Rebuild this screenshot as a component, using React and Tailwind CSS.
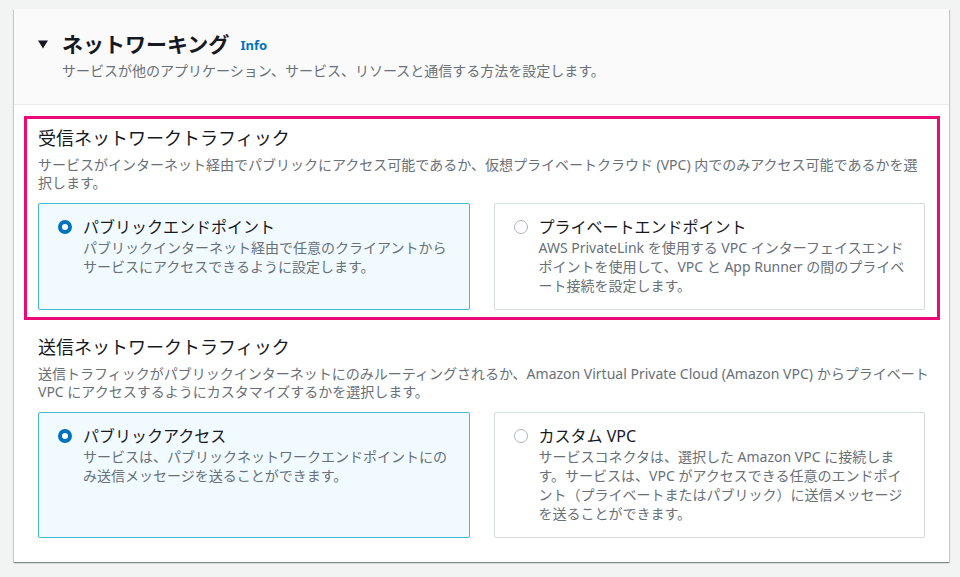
import React, { useState } from 'react'

const FONT = '"Noto Sans", "Noto Sans CJK JP", sans-serif'

const inbound = [
  {
    id: 'public',
    label: 'パブリックエンドポイント',
    lines: ['パブリックインターネット経由で任意のクライアントから', 'サービスにアクセスできるように設定します。'],
  },
  {
    id: 'private',
    label: 'プライベートエンドポイント',
    lines: [
      'AWS PrivateLink を使用する VPC インターフェイスエンド',
      'ポイントを使用して、VPC と App Runner の間のプライベ',
      'ート接続を設定します。',
    ],
  },
]

const outbound = [
  {
    id: 'public',
    label: 'パブリックアクセス',
    lines: ['サービスは、パブリックネットワークエンドポイントにの', 'み送信メッセージを送ることができます。'],
  },
  {
    id: 'vpc',
    label: 'カスタム VPC',
    lines: [
      'サービスコネクタは、選択した Amazon VPC に接続しま',
      'す。サービスは、VPC がアクセスできる任意のエンドポイ',
      'ント（プライベートまたはパブリック）に送信メッセージ',
      'を送ることができます。',
    ],
  },
]

const Radio = ({ checked }) =>
  checked ? (
    <span className="mt-[4px] w-[14px] h-[14px] rounded-full border-[4px] border-[#0073bb] bg-white flex-shrink-0" />
  ) : (
    <span className="mt-[4px] w-[14px] h-[14px] rounded-full border-[1.5px] border-[#aab7b8] bg-white flex-shrink-0" />
  )

const Tile = ({ option, checked, onSelect }) => (
  <button
    type="button"
    onClick={onSelect}
    className={
      'text-left rounded-[2px] border pl-[19px] pr-[12px] pt-[12px] pb-[14px] flex items-start gap-[11px] ' +
      (checked ? 'border-[#44b9d6] bg-[#f1faff]' : 'border-[#d5dbdb] bg-white')
    }
  >
    <Radio checked={checked} />
    <div className="min-w-0">
      <div className="text-[16px] leading-[22px] text-[#16191f]">{option.label}</div>
      <div className="text-[14px] leading-[19px] text-[#687078]">
        {option.lines.map((l) => (
          <span key={l} className="block whitespace-nowrap">
            {l}
          </span>
        ))}
      </div>
    </div>
  </button>
)

const Section = ({ title, lines, options, value, onChange }) => (
  <div>
    <h3 className="text-[18px] leading-[24px] text-[#16191f]">{title}</h3>
    <p className="mt-[6px] text-[14px] leading-[18px] text-[#687078]">
      {lines.map((l) => (
        <span key={l} className="block whitespace-nowrap">
          {l}
        </span>
      ))}
    </p>
    <div className="mt-[11px] grid grid-cols-2 gap-[24px]">
      {options.map((o) => (
        <Tile key={o.id} option={o} checked={value === o.id} onSelect={() => onChange(o.id)} />
      ))}
    </div>
  </div>
)

export default function App() {
  const [inValue, setInValue] = useState('public')
  const [outValue, setOutValue] = useState('public')

  return (
    <div className="min-h-[577px] bg-[#f2f3f3] pt-[9px] pl-[14px] pr-[11px]" style={{ fontFamily: FONT }}>
      <div className="bg-white shadow-[0_1px_1px_0_rgba(0,28,36,0.3),1px_1px_1px_0_rgba(0,28,36,0.15),-1px_1px_1px_0_rgba(0,28,36,0.15)]">
        <div className="bg-[#fafafa] border-b border-[#eaeded] pl-[24px] pt-[20px] pb-[23px]">
          <div className="flex items-center">
            <svg width="10" height="9" viewBox="0 0 10 9" className="mr-[14px]">
              <path d="M0 0.5h10L5 8.5z" fill="#16191f" />
            </svg>
            <h2 className="text-[21px] leading-[30px] font-bold text-[#16191f]">ネットワーキング</h2>
            <a href="#" className="ml-[11px] mt-[3px] text-[13px] font-bold text-[#0073bb]">
              Info
            </a>
          </div>
          <p className="pl-[24px] mt-[2px] text-[14px] leading-[20px] text-[#687078]">
            サービスが他のアプリケーション、サービス、リソースと通信する方法を設定します。
          </p>
        </div>

        <div className="pt-[11px] pb-[24px] pl-[10px] pr-[9px]">
          <div className="border-[3px] border-[#eb0a75] pl-[11px] pr-[12px] pt-[7px] pb-[7px]">
            <Section
              title="受信ネットワークトラフィック"
              lines={[
                'サービスがインターネット経由でパブリックにアクセス可能であるか、仮想プライベートクラウド (VPC) 内でのみアクセス可能であるかを選',
                '択します。',
              ]}
              options={inbound}
              value={inValue}
              onChange={setInValue}
            />
          </div>
          <div className="pl-[14px] pr-[15px] pt-[15px]">
            <Section
              title="送信ネットワークトラフィック"
              lines={[
                '送信トラフィックがパブリックインターネットにのみルーティングされるか、Amazon Virtual Private Cloud (Amazon VPC) からプライベート',
                'VPC にアクセスするようにカスタマイズするかを選択します。',
              ]}
              options={outbound}
              value={outValue}
              onChange={setOutValue}
            />
          </div>
        </div>
      </div>
    </div>
  )
}
